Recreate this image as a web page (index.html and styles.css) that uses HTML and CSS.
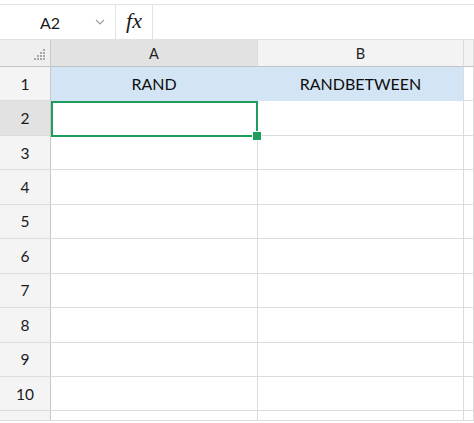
FILE: index.html
```html
<!DOCTYPE html>
<html>
<head>
<meta charset="utf-8">
<link rel="stylesheet" href="styles.css">
</head>
<body>
<div class="formula-bar">
  <div class="name-box"><span class="ref">A2</span>
    <svg class="chev" width="10" height="6" viewBox="0 0 10 6"><path d="M1 1 L5 5 L9 1" fill="none" stroke="#9a9a9a" stroke-width="1.1"/></svg>
  </div>
  <div class="fx">fx</div>
  <div class="input"></div>
</div>
<div class="sheet">
  <div class="grid">
    <div class="corner"><svg width="16" height="16" viewBox="0 0 16 16" fill="#a8a8a8">
      <rect x="12" y="2" width="2" height="2"/>
      <rect x="9" y="5" width="2" height="2"/><rect x="12" y="5" width="2" height="2"/>
      <rect x="6" y="8" width="2" height="2"/><rect x="9" y="8" width="2" height="2"/><rect x="12" y="8" width="2" height="2"/>
      <rect x="3" y="11" width="2" height="2"/><rect x="6" y="11" width="2" height="2"/><rect x="9" y="11" width="2" height="2"/><rect x="12" y="11" width="2" height="2"/>
    </svg></div>
    <div class="colhead active">A</div>
    <div class="colhead">B</div>
    <div class="colhead"></div>

    <div class="rowhead">1</div>
    <div class="cell blue">RAND</div>
    <div class="cell blue">RANDBETWEEN</div>
    <div class="cell"></div>

    <div class="rowhead active">2</div><div class="cell"></div><div class="cell"></div><div class="cell"></div>
    <div class="rowhead">3</div><div class="cell"></div><div class="cell"></div><div class="cell"></div>
    <div class="rowhead">4</div><div class="cell"></div><div class="cell"></div><div class="cell"></div>
    <div class="rowhead">5</div><div class="cell"></div><div class="cell"></div><div class="cell"></div>
    <div class="rowhead">6</div><div class="cell"></div><div class="cell"></div><div class="cell"></div>
    <div class="rowhead">7</div><div class="cell"></div><div class="cell"></div><div class="cell"></div>
    <div class="rowhead">8</div><div class="cell"></div><div class="cell"></div><div class="cell"></div>
    <div class="rowhead">9</div><div class="cell"></div><div class="cell"></div><div class="cell"></div>
    <div class="rowhead">10</div><div class="cell"></div><div class="cell"></div><div class="cell"></div>
    <div class="rowhead"></div><div class="cell"></div><div class="cell"></div><div class="cell"></div>
  </div>
  <div class="selection"><div class="handle"></div></div>
</div>
</body>
</html>
```
FILE: styles.css
```css
html, body { margin: 0; padding: 0; background: #fff; }
body { font-family: Lato, "Open Sans", sans-serif; color: #222; overflow: hidden; width: 474px; height: 423px; }

.formula-bar {
  margin-top: 4px;
  height: 36px;
  box-sizing: border-box;
  border-top: 1px solid #e2e2e2;
  border-bottom: 1px solid #e2e2e2;
  display: flex;
}
.name-box {
  width: 116px;
  box-sizing: border-box;
  border-right: 1px solid #e2e2e2;
  display: flex;
  align-items: center;
  padding-left: 40px;
}
.ref { font-size: 16px; color: #1a1a1a; }
.chev { margin-left: 35px; }
.fx {
  width: 37px;
  box-sizing: border-box;
  border-right: 1px solid #e2e2e2;
  display: flex;
  align-items: center;
  justify-content: center;
  font-family: "Liberation Serif", serif;
  font-style: italic;
  font-size: 22px;
  color: #1a1a1a;
  padding-bottom: 3px;
}
.input { flex: 1; }

.sheet { position: relative; }
.grid {
  display: grid;
  grid-template-columns: 51px 207px 206px 1fr;
  grid-template-rows: 27px repeat(10, 34.45px) 10px;
}
.grid > div {
  box-sizing: border-box;
  border-right: 1px solid #dcdcdc;
  border-bottom: 1px solid #dcdcdc;
  display: flex;
  align-items: center;
  justify-content: center;
}
.corner {
  background: #efefef;
  border-right: 1px solid #c9c9c9 !important;
  border-bottom: 1px solid #c4c4c4 !important;
  justify-content: flex-end !important;
  align-items: flex-end !important;
  padding: 0 3px 3px 0;
}
.colhead {
  background: #f3f3f3;
  font-size: 14.5px;
  color: #222;
  border-bottom: 1px solid #c4c4c4 !important;
}
.colhead.active { background: #e2e2e2; }
.rowhead {
  background: #f4f4f4;
  font-size: 15.5px;
  color: #1a1a1a;
  border-right: 1px solid #c9c9c9 !important;
}
.rowhead.active { background: #e2e2e2; }
.cell { font-size: 16px; color: #0d0d0d; }
.cell.blue { background: #d3e5f5; border-right-color: #d3e5f5; border-bottom-color: #d3e5f5; }
.cell.blue + .cell.blue { border-right-color: #dcdcdc; }

.selection {
  position: absolute;
  left: 51px;
  top: 61px;
  width: 207px;
  height: 36px;
  box-sizing: border-box;
  border: 2px solid #1e9e5e;
}
.handle {
  position: absolute;
  right: -6px;
  bottom: -6px;
  width: 8px;
  height: 8px;
  background: #1e9e5e;
  border: 1px solid #fff;
}
```
